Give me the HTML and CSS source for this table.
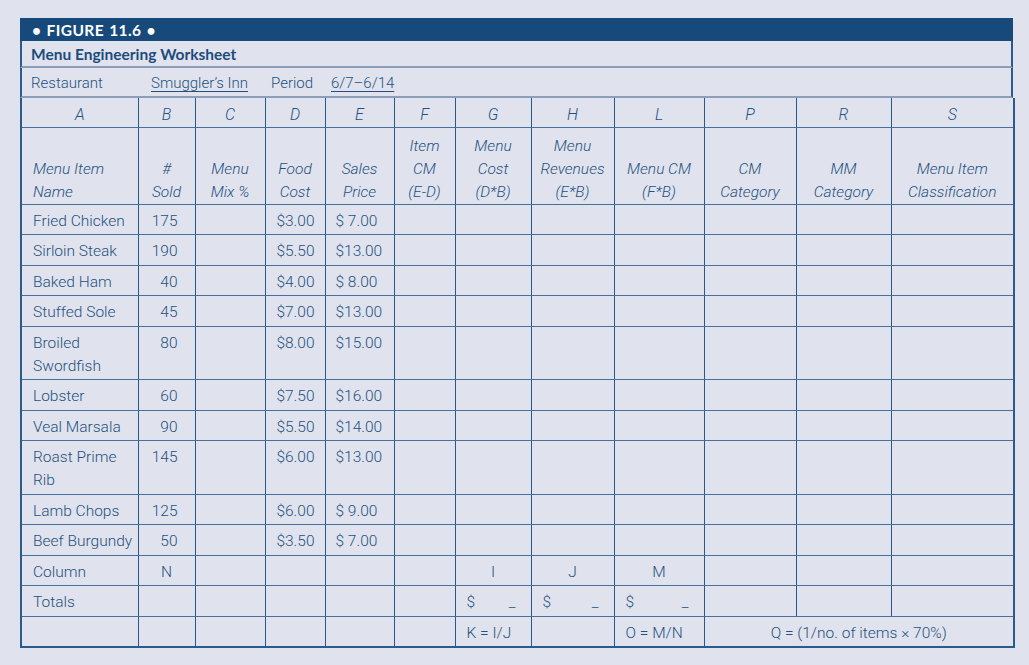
FILE: index.html
```html
<!DOCTYPE html>
<html lang="en">
<head>
<meta charset="utf-8">
<title>Menu Engineering Worksheet</title>
<link rel="stylesheet" href="styles.css">
</head>
<body>
<div class="figure">
  <div class="fig-bar"><span class="fig-label">• FIGURE 11.6 •</span></div>
  <div class="fig-title">Menu Engineering Worksheet</div>
  <div class="fig-info">
    <span class="info-label lbl-restaurant">Restaurant</span>
    <span class="info-cell val-restaurant"><span class="info-value">Smuggler’s Inn</span></span>
    <span class="info-label lbl-period">Period</span>
    <span class="info-cell"><span class="info-value">6/7–6/14</span></span>
  </div>
  <table class="sheet">
    <colgroup>
      <col class="c-a"><col class="c-b"><col class="c-c"><col class="c-d"><col class="c-e"><col class="c-f">
      <col class="c-g"><col class="c-h"><col class="c-l"><col class="c-p"><col class="c-r"><col class="c-s">
    </colgroup>
    <tr class="letters">
      <td>A</td><td>B</td><td>C</td><td>D</td><td>E</td><td>F</td><td>G</td><td>H</td><td>L</td><td>P</td><td>R</td><td>S</td>
    </tr>
    <tr class="heads">
      <td class="left">Menu Item<br>Name</td>
      <td>#<br>Sold</td>
      <td>Menu<br>Mix %</td>
      <td>Food<br>Cost</td>
      <td>Sales<br>Price</td>
      <td>Item<br>CM<br>(E-D)</td>
      <td>Menu<br>Cost<br>(D*B)</td>
      <td>Menu<br>Revenues<br>(E*B)</td>
      <td>Menu CM<br>(F*B)</td>
      <td>CM<br>Category</td>
      <td>MM<br>Category</td>
      <td>Menu Item<br>Classification</td>
    </tr>
    <tr><td class="left">Fried Chicken</td><td class="num">175</td><td></td><td class="food">$3.00</td><td class="price">$ 7.00</td><td></td><td></td><td></td><td></td><td></td><td></td><td></td></tr>
    <tr><td class="left">Sirloin Steak</td><td class="num">190</td><td></td><td class="food">$5.50</td><td class="price">$13.00</td><td></td><td></td><td></td><td></td><td></td><td></td><td></td></tr>
    <tr><td class="left">Baked Ham</td><td class="num">40</td><td></td><td class="food">$4.00</td><td class="price">$ 8.00</td><td></td><td></td><td></td><td></td><td></td><td></td><td></td></tr>
    <tr><td class="left">Stuffed Sole</td><td class="num">45</td><td></td><td class="food">$7.00</td><td class="price">$13.00</td><td></td><td></td><td></td><td></td><td></td><td></td><td></td></tr>
    <tr><td class="left">Broiled<br>Swordfish</td><td class="num">80</td><td></td><td class="food">$8.00</td><td class="price">$15.00</td><td></td><td></td><td></td><td></td><td></td><td></td><td></td></tr>
    <tr><td class="left">Lobster</td><td class="num">60</td><td></td><td class="food">$7.50</td><td class="price">$16.00</td><td></td><td></td><td></td><td></td><td></td><td></td><td></td></tr>
    <tr><td class="left">Veal Marsala</td><td class="num">90</td><td></td><td class="food">$5.50</td><td class="price">$14.00</td><td></td><td></td><td></td><td></td><td></td><td></td><td></td></tr>
    <tr><td class="left">Roast Prime<br>Rib</td><td class="num">145</td><td></td><td class="food">$6.00</td><td class="price">$13.00</td><td></td><td></td><td></td><td></td><td></td><td></td><td></td></tr>
    <tr><td class="left">Lamb Chops</td><td class="num">125</td><td></td><td class="food">$6.00</td><td class="price">$ 9.00</td><td></td><td></td><td></td><td></td><td></td><td></td><td></td></tr>
    <tr><td class="left">Beef Burgundy</td><td class="num">50</td><td></td><td class="food">$3.50</td><td class="price">$ 7.00</td><td></td><td></td><td></td><td></td><td></td><td></td><td></td></tr>
    <tr><td class="left">Column</td><td class="mid">N</td><td></td><td></td><td></td><td></td><td class="mid">I</td><td class="mid">J</td><td class="mid">M</td><td></td><td></td><td></td></tr>
    <tr><td class="left">Totals</td><td></td><td></td><td></td><td></td><td></td>
      <td><div class="total"><span>$</span><span>_</span></div></td>
      <td><div class="total"><span>$</span><span>_</span></div></td>
      <td><div class="total"><span>$</span><span>_</span></div></td>
      <td></td><td></td><td></td></tr>
    <tr><td></td><td></td><td></td><td></td><td></td><td></td><td class="left">K = I/J</td><td></td><td class="left">O = M/N</td><td class="mid" colspan="3">Q = (1/no. of items × 70%)</td></tr>
  </table>
</div>
</body>
</html>
```
FILE: styles.css
```css
html, body {
  margin: 0;
  padding: 0;
  background: #e0e3ed;
}
body {
  padding: 18px 0 0 20px;
  font-family: Roboto, "DejaVu Sans Condensed", sans-serif;
  font-weight: 300;
  color: #24517f;
}
.figure {
  width: 993px;
}
.fig-bar {
  height: 23px;
  background: #174a7b;
  display: flex;
  align-items: center;
  padding-left: 12px;
}
.fig-label {
  font-family: Lato, "Liberation Sans", sans-serif;
  font-weight: 700;
  font-size: 15.5px;
  color: #ffffff;
  letter-spacing: 0.4px;
  word-spacing: 1px;
}
.fig-title {
  height: 24px;
  border-left: 2px solid #2b5a8c;
  border-right: 2px solid #2b5a8c;
  border-bottom: 2px solid #8c9fb8;
  padding-left: 9px;
  padding-top: 1px;
  display: flex;
  align-items: center;
  font-family: Lato, "Liberation Sans", sans-serif;
  font-weight: 700;
  font-size: 15.5px;
  color: #1d4b7c;
}
.fig-info {
  height: 26px;
  border-left: 2px solid #2b5a8c;
  border-right: 2px solid #2b5a8c;
  border-bottom: 2px solid #8c9fb8;
  padding-left: 9px;
  padding-top: 2px;
  display: flex;
  align-items: center;
  font-size: 15px;
}
.info-label, .info-cell {
  display: inline-block;
}
.lbl-restaurant { width: 120px; }
.val-restaurant { width: 120px; }
.lbl-period { width: 60px; }
.info-value {
  text-decoration: underline;
  text-underline-offset: 3px;
  text-decoration-thickness: 1px;
}
.sheet {
  width: 993px;
  table-layout: fixed;
  border-collapse: collapse;
  border: 2px solid #2b5a8c;
  border-top: none;
  font-size: 15.5px;
}
.c-a { width: 117px; }
.c-b { width: 57px; }
.c-c { width: 70px; }
.c-d { width: 60px; }
.c-e { width: 69px; }
.c-f { width: 61px; }
.c-g { width: 76px; }
.c-h { width: 83px; }
.c-l { width: 90px; }
.c-p { width: 92px; }
.c-r { width: 95px; }
.c-s { width: 123px; }
.sheet td {
  border-left: 1px solid #2b5789;
  border-right: 1px solid #2b5789;
  border-top: 1px solid #46709e;
  border-bottom: 1px solid #46709e;
  padding: 5px 0 1.5px;
  line-height: 23px;
  vertical-align: top;
  white-space: nowrap;
}
.letters td {
  text-align: center;
  font-style: italic;
  font-size: 16px;
  padding: 5px 0 1px;
  border-top: none;
}
.heads td {
  text-align: center;
  font-style: italic;
  vertical-align: bottom;
  padding: 6.5px 0 0;
}
.sheet td.left {
  text-align: left;
  padding-left: 11px;
}
.sheet td.num {
  text-align: right;
  padding-right: 17px;
}
.sheet td.food {
  text-align: right;
  padding-right: 10px;
}
.sheet td.price {
  text-align: left;
  padding-left: 10px;
}
.sheet td.mid {
  text-align: center;
}
.total {
  display: flex;
  justify-content: space-between;
  padding: 0 15px 0 11px;
}
```
